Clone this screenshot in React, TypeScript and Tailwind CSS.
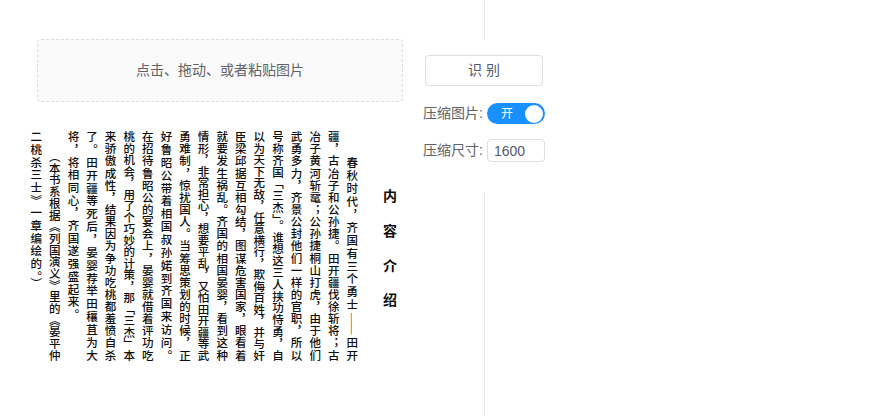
import React from "react";

const columns: { text: string; justify: boolean; pt?: string }[] = [
  { text: "春秋时代，齐国有三个勇士——田开", justify: true, pt: "pt-[26px]" },
  { text: "疆，古冶子和公孙捷。田开疆伐徐斩将；古", justify: true },
  { text: "冶子黄河斩鼋；公孙捷桐山打虎，由于他们", justify: true },
  { text: "武勇多力，齐景公封他们一样的官职，所以", justify: true },
  { text: "号称齐国「三杰」。谁想这三人挟功恃勇，自", justify: true },
  { text: "以为天下无敌，任意横行，欺侮百姓，并与奸", justify: true },
  { text: "臣梁邱据互相勾结，图谋危害国家，眼看着", justify: true },
  { text: "就要发生祸乱。齐国的相国晏婴，看到这种", justify: true },
  { text: "情形，非常担心，想要平乱，又怕田开疆等武", justify: true },
  { text: "勇难制，惊扰国人。当筹思策划的时候，正", justify: true },
  { text: "好鲁昭公带着相国叔孙婼到齐国来访问。", justify: true },
  { text: "在招待鲁昭公的宴会上，晏婴就借着评功吃", justify: true },
  { text: "桃的机会，用了个巧妙的计策，那「三杰」本", justify: true },
  { text: "来骄傲成性，结果因为争功吃桃都羞愤自杀", justify: true },
  { text: "了。田开疆等死后，晏婴荐举田穰苴为大", justify: true },
  { text: "将，将相同心，齐国遂强盛起来。", justify: false },
  { text: "（本书系根据《列国演义》里的《晏平仲", justify: true, pt: "pt-[20px]" },
  { text: "二桃杀三士》一章编绘的。）", justify: false },
];

function TextImage() {
  return (
    <div
      lang="zh-CN"
      className="-ml-[11px] mt-[25px] flex h-[238px] w-[378px] flex-row-reverse items-start pr-[4px] text-[#0d0d0d]"
      style={{ fontFamily: '"Noto Sans CJK SC", sans-serif' }}
    >
      <div className="mt-[62px] h-[150px] w-[20px] text-[14px] font-bold leading-[20px] tracking-[20.7px] [writing-mode:vertical-rl]">
        内容介绍
      </div>
      <div className="w-[18.7px] shrink-0" />
      {columns.map((c, i) => (
        <div
          key={i}
          className={
            "mt-[4px] h-[230px] w-[18.6px] shrink-0 overflow-visible whitespace-nowrap text-[11.5px] font-medium leading-[18.6px] [writing-mode:vertical-rl] " +
            (c.justify ? "text-justify [text-align-last:justify] " : "tracking-[1.2px] ") +
            (c.pt ?? "")
          }
        >
          {c.text}
        </div>
      ))}
    </div>
  );
}

export default function App() {
  return (
    <div
      lang="zh-CN"
      className="flex h-[416px] w-[895px] overflow-hidden bg-white"
      style={{ fontFamily: '"Liberation Sans", "Noto Sans CJK SC", sans-serif' }}
    >
      <div className="h-[416px] w-[485px] shrink-0 border-r border-[#e8eaec]">
        <div className="flex pl-[37px] pt-[39px]">
          <div className="w-[366px] shrink-0">
            <div className="flex h-[63px] w-[366px] items-center justify-center rounded-[4px] border border-dashed border-[#dcdee2] bg-[#fafafa] text-[14px] text-[#606266]">
              点击、拖动、或者粘贴图片
            </div>
            <TextImage />
          </div>
          <div className="ml-[20px] h-[154px] w-[140px] shrink-0 bg-white pt-[16px] text-[14px] text-[#606266]">
            <button className="ml-[2px] flex h-[31px] w-[118px] items-center justify-center rounded-[4px] border border-[#dcdee2] bg-white text-[14px] text-[#515a6e]">
              识 别
            </button>
            <div className="mt-[17px] flex h-[21px] items-center">
              <span className="w-[64px] shrink-0 leading-[21px]">压缩图片:</span>
              <span className="flex h-[21px] w-[58px] items-center justify-between rounded-full bg-[#1890ff] pl-[14px] pr-[2px]">
                <span className="text-[12px] leading-none text-white">开</span>
                <span className="h-[18px] w-[18px] rounded-full bg-white" />
              </span>
            </div>
            <div className="mt-[15px] flex h-[23px] items-center">
              <span className="w-[64px] shrink-0 leading-[23px]">压缩尺寸:</span>
              <input
                readOnly
                value="1600"
                className="h-[23px] w-[58px] rounded-[4px] border border-[#dcdee2] bg-white px-[6px] text-[14px] text-[#515a6e] outline-none"
              />
            </div>
          </div>
        </div>
      </div>
      <div className="flex-1" />
    </div>
  );
}
